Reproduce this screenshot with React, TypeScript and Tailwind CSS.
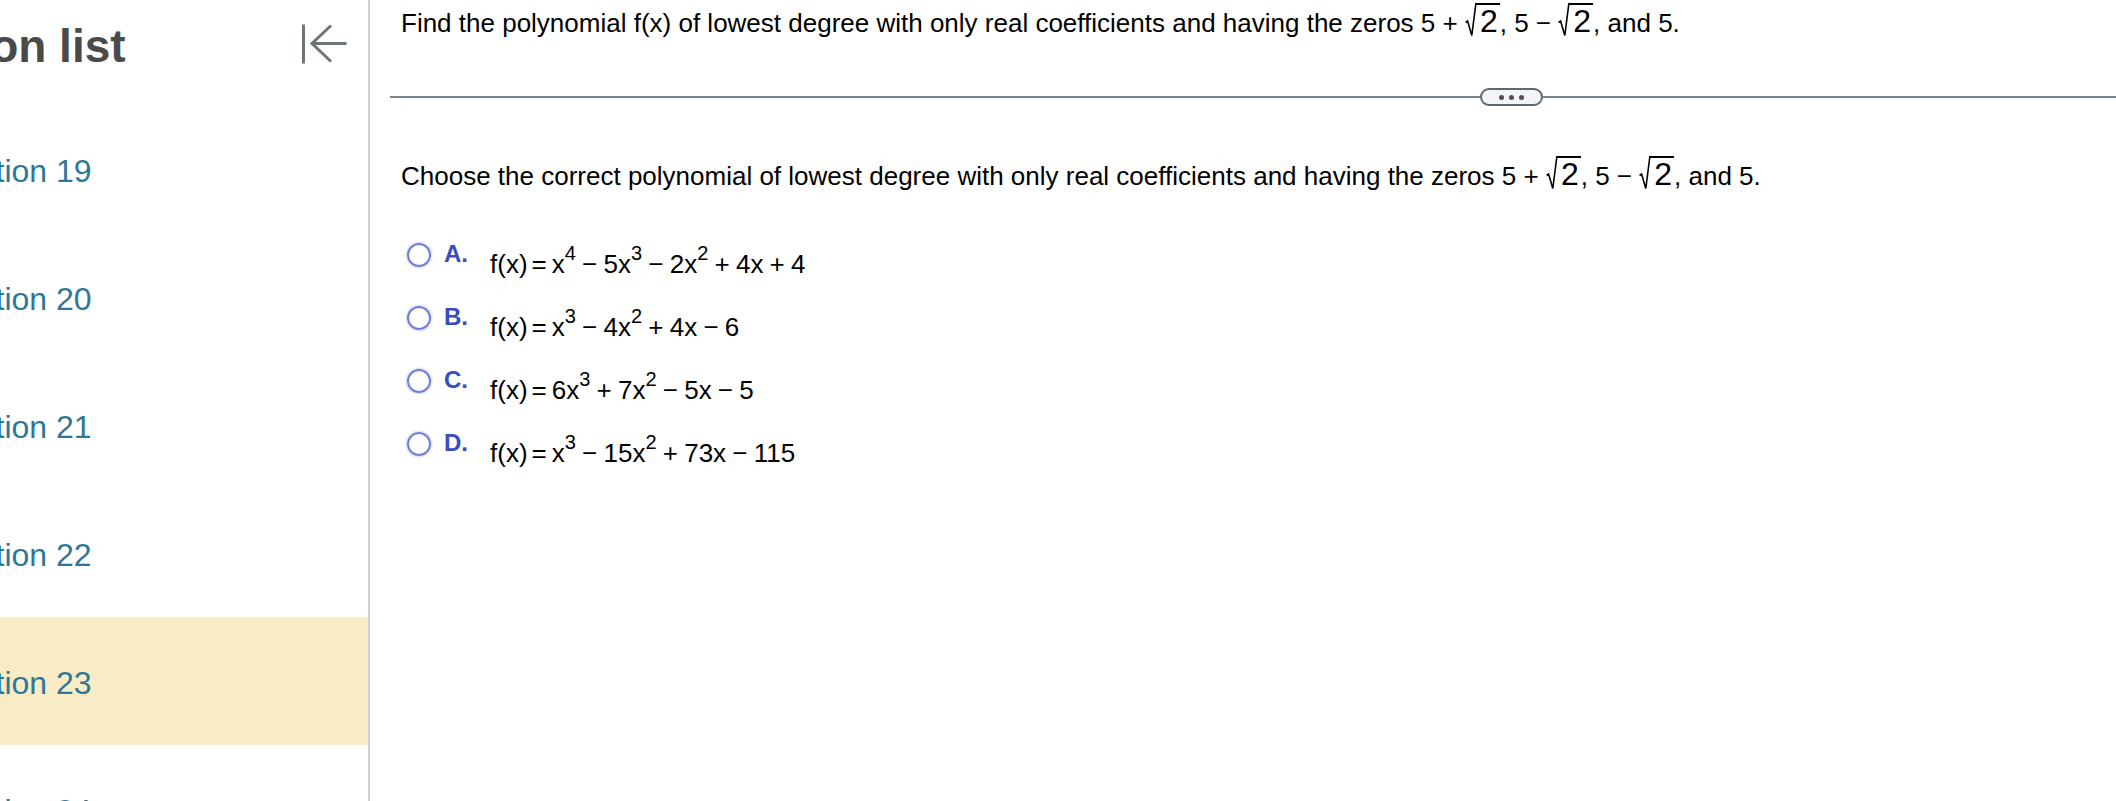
import React from "react";

function Sqrt2() {
  return (
    <span className="relative -mt-[8px] inline-block pl-[10px]">
      <svg
        className="absolute left-0 top-0"
        width="12"
        height="36"
        viewBox="0 0 12 36"
        fill="none"
      >
        <path d="M0.6 19.5 L2.6 18 L6.8 32.5 L10.8 1" stroke="#000" strokeWidth="1.6" strokeLinejoin="miter" />
      </svg>
      <span className="inline-block border-t-2 border-black pl-[5px] pr-[2px] text-[32px] leading-none">2</span>
    </span>
  );
}

function Zeros() {
  return (
    <>
      5 + <Sqrt2 />, 5 − <Sqrt2 />, and 5.
    </>
  );
}

type Seg = { t: string; sup?: string };

const options: { letter: string; lead: string; segs: Seg[] }[] = [
  {
    letter: "A.",
    lead: "x",
    segs: [
      { t: "", sup: "4" },
      { t: " − 5x", sup: "3" },
      { t: " − 2x", sup: "2" },
      { t: " + 4x + 4" },
    ],
  },
  {
    letter: "B.",
    lead: "x",
    segs: [
      { t: "", sup: "3" },
      { t: " − 4x", sup: "2" },
      { t: " + 4x − 6" },
    ],
  },
  {
    letter: "C.",
    lead: "6x",
    segs: [
      { t: "", sup: "3" },
      { t: " + 7x", sup: "2" },
      { t: " − 5x − 5" },
    ],
  },
  {
    letter: "D.",
    lead: "x",
    segs: [
      { t: "", sup: "3" },
      { t: " − 15x", sup: "2" },
      { t: " + 73x − 115" },
    ],
  },
];

const questions = [19, 20, 21, 22, 23, 24];

export default function App() {
  return (
    <div className="flex h-[801px] w-[2116px] overflow-hidden bg-white font-['Liberation_Sans',Arial,sans-serif]">
      <aside className="w-[370px] shrink-0 overflow-hidden border-r-2 border-[#cbcfd8]">
        <div className="flex h-[105px] items-start">
          <span className="-ml-[153px] mt-[23px] whitespace-nowrap text-[46px] font-bold leading-none text-[#4a4a4a]">
            Question list
          </span>
          <button className="ml-auto mr-[21px] mt-[24px]" aria-label="Collapse">
            <svg width="46" height="40" viewBox="0 0 46 40" fill="none">
              <path d="M2.5 0.5 V39.5" stroke="#6c7676" strokeWidth="3" />
              <path d="M10 19.5 H45.5" stroke="#6c7676" strokeWidth="3" />
              <path d="M30 1.5 L11 19.5 L30 37.5" stroke="#6c7676" strokeWidth="3" strokeLinejoin="miter" />
            </svg>
          </button>
        </div>
        {questions.map((n) => (
          <div
            key={n}
            className={
              n === 23
                ? "flex h-[128px] items-center bg-[#f8ecc6]"
                : "flex h-[128px] items-center"
            }
          >
            <span className="-ml-[81px] mt-[3px] whitespace-nowrap text-[32px] leading-none text-[#2f7797]">
              Question {n}
            </span>
          </div>
        ))}
      </aside>

      <main className="min-w-0 flex-1 pl-[20px]">
        <p className="ml-[11px] mt-[10px] h-[26px] whitespace-nowrap text-[26px] leading-[26px] text-black">
          Find the polynomial f(x) of lowest degree with only real coefficients and having the zeros <Zeros />
        </p>

        <div className="mt-[52px] flex h-[18px] items-center">
          <div className="h-[2px] w-[1090px] bg-[#7d8591]" />
          <button className="flex h-[18px] w-[63px] shrink-0 items-center justify-center gap-[5px] rounded-full border-2 border-[#5e6774] bg-[#f3f4f6]">
            <span className="h-[5px] w-[5px] rounded-full bg-[#4a5059]" />
            <span className="h-[5px] w-[5px] rounded-full bg-[#4a5059]" />
            <span className="h-[5px] w-[5px] rounded-full bg-[#4a5059]" />
          </button>
          <div className="h-[2px] flex-1 bg-[#7d8591]" />
        </div>

        <p className="ml-[11px] mt-[57px] h-[26px] whitespace-nowrap text-[26px] leading-[26px] text-black">
          Choose the correct polynomial of lowest degree with only real coefficients and having the zeros <Zeros />
        </p>

        <div className="mt-[47px]">
          {options.map((o) => (
            <div key={o.letter} className="flex h-[63px] items-start">
              <span className="ml-[17px] mt-[7px] h-[24px] w-[24px] shrink-0 rounded-full border-[2.5px] border-[#7080d9] shadow-[0_0_2px_1px_rgba(120,135,220,0.35)]" />
              <span className="ml-[13px] mt-[6px] w-[46px] shrink-0 text-[24px] font-bold leading-none text-[#3a4bc0]">
                {o.letter}
              </span>
              <span className="mt-[15px] whitespace-pre text-[26px] leading-[26px] text-black [word-spacing:-1px]">
                f(x)
                <span className="ml-[4px] mr-[5px] inline-block">=</span>
                {o.lead}
                {o.segs.map((s, i) => (
                  <React.Fragment key={i}>
                    {s.t}
                    {s.sup && (
                      <span className="relative -top-[13px] text-[20px] leading-none">{s.sup}</span>
                    )}
                  </React.Fragment>
                ))}
              </span>
            </div>
          ))}
        </div>
      </main>
    </div>
  );
}
